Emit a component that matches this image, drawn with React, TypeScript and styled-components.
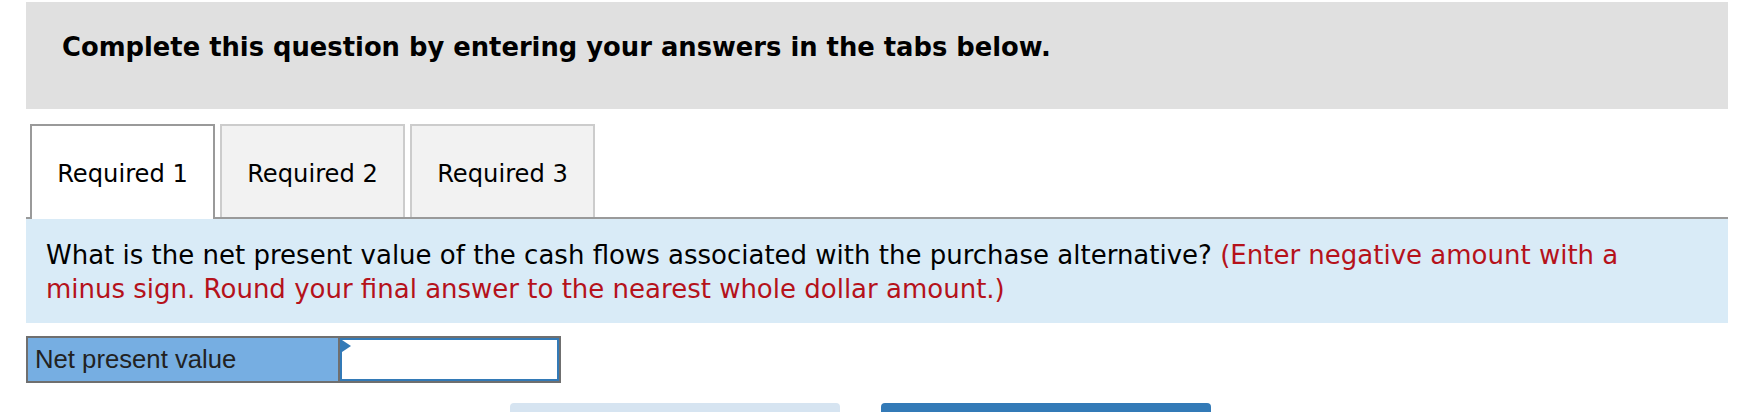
import React from "react";
import styled, { createGlobalStyle } from "styled-components";

const GlobalStyle = createGlobalStyle`
  html, body {
    margin: 0;
    padding: 0;
    background: #ffffff;
    overflow: hidden;
  }
  body {
    font-family: "DejaVu Sans", Verdana, sans-serif;
    color: #000;
  }
`;

const Page = styled.div`
  width: 1702px;
  height: 410px;
  overflow: hidden;
  padding: 2px 0 0 26px;
  display: flex;
  flex-direction: column;
`;

const Header = styled.div`
  height: 107px;
  flex: none;
  box-sizing: border-box;
  background: #e0e0e0;
  padding: 30px 0 0 36px;
`;

const Title = styled.h2`
  margin: 0;
  font-family: "DejaVu Sans", Verdana, sans-serif;
  font-weight: bold;
  font-size: 25.8px;
  line-height: 30px;
  color: #000;
`;

const TabStrip = styled.div`
  margin-top: 15px;
  flex: none;
  display: flex;
  align-items: flex-end;
  gap: 5px;
  padding-left: 4px;
  border-bottom: 2px solid #9a9a9a;
`;

const Tab = styled.div<{ $active?: boolean }>`
  box-sizing: border-box;
  width: 185px;
  height: ${(p) => (p.$active ? "95px" : "93px")};
  margin-bottom: ${(p) => (p.$active ? "-2px" : "0")};
  padding-top: 34px;
  text-align: center;
  font-family: "DejaVu Sans", Verdana, sans-serif;
  font-size: 24.2px;
  line-height: 28px;
  color: #000;
  background: ${(p) => (p.$active ? "#ffffff" : "#f2f2f2")};
  border: 2px solid ${(p) => (p.$active ? "#9a9a9a" : "#cccccc")};
  border-bottom: none;
`;

const Panel = styled.div`
  flex: none;
  background: #d9ebf7;
  padding: 19px 20px 17px 20px;
  font-family: "DejaVu Sans", Verdana, sans-serif;
  font-size: 26px;
  line-height: 34px;
  color: #000;
`;

const Note = styled.span`
  color: #b5121b;
`;

const AnswerRow = styled.div`
  flex: none;
  margin-top: 13px;
  width: 535px;
  height: 47px;
  box-sizing: border-box;
  border: 2px solid #6f6f6f;
  display: flex;
`;

const Label = styled.div`
  width: 312px;
  box-sizing: border-box;
  border-right: 2px solid #6f6f6f;
  background: #76aee2;
  padding-left: 7px;
  display: flex;
  align-items: center;
  font-family: "Liberation Sans", Arial, sans-serif;
  font-size: 25.7px;
  color: #222;
`;

const InputCell = styled.div`
  flex: 1;
  position: relative;
  box-sizing: border-box;
  border: 2px solid #337ab7;
  background: #fff;
`;

const Marker = styled.span`
  position: absolute;
  left: 0;
  top: 0;
  width: 0;
  height: 0;
  border-left: 9px solid #337ab7;
  border-top: 6.5px solid transparent;
  border-bottom: 6.5px solid transparent;
`;

const Nav = styled.div`
  flex: none;
  margin-top: 20px;
  display: flex;
  gap: 41px;
  padding-left: 484px;
`;

const NavButton = styled.button<{ $primary?: boolean }>`
  width: 330px;
  height: 46px;
  border: none;
  border-radius: 4px;
  padding: 0;
  background: ${(p) => (p.$primary ? "#337ab7" : "#d6e4f1")};
`;

export default function App() {
  return (
    <>
      <GlobalStyle />
      <Page>
        <Header>
          <Title>Complete this question by entering your answers in the tabs below.</Title>
        </Header>
        <TabStrip>
          <Tab $active>Required 1</Tab>
          <Tab>Required 2</Tab>
          <Tab>Required 3</Tab>
        </TabStrip>
        <Panel>
          What is the net present value of the cash flows associated with the purchase alternative?{" "}
          <Note>
            (Enter negative amount with a
            <br />
            minus sign. Round your final answer to the nearest whole dollar amount.)
          </Note>
        </Panel>
        <AnswerRow>
          <Label>Net present value</Label>
          <InputCell>
            <Marker />
          </InputCell>
        </AnswerRow>
        <Nav>
          <NavButton aria-label="Required 1" />
          <NavButton $primary aria-label="Required 2" />
        </Nav>
      </Page>
    </>
  );
}
